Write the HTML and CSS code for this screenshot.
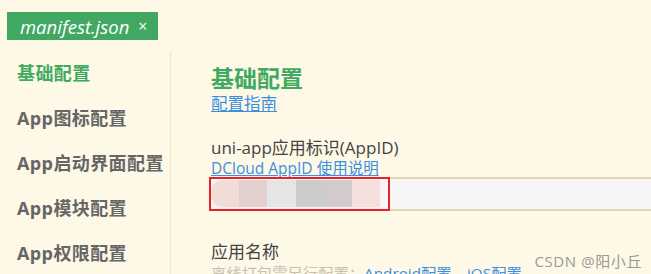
FILE: index.html
```html
<!DOCTYPE html>
<html lang="zh-CN">
<head>
    <meta charset="UTF-8">
    <title>manifest.json</title>
    <link rel="stylesheet" href="styles.css">
</head>
<body>
    <div class="tabs">
        <div class="tab">
            <span class="tab-name">manifest.json</span>
            <span class="tab-close">×</span>
        </div>
    </div>

    <div class="editor">
        <div class="sidebar">
            <a class="side-item active">基础配置</a>
            <a class="side-item">App图标配置</a>
            <a class="side-item">App启动界面配置</a>
            <a class="side-item">App模块配置</a>
            <a class="side-item">App权限配置</a>
        </div>
        <div class="main">
            <h1>基础配置</h1>
            <a class="link">配置指南</a>

            <div class="field">
                <div class="field-label">uni-app应用标识(AppID)</div>
                <a class="link small">DCloud AppID 使用说明</a>
                <div class="input-wrap">
                    <div class="input"></div>
                    <div class="mask">
                        <span class="m1"></span><span class="m2"></span><span class="m3"></span><span class="m4"></span><span class="m5"></span><span class="m6"></span>
                    </div>
                </div>
            </div>

            <div class="field">
                <div class="field-label">应用名称</div>
                <div class="hint">离线打包需另行配置：<a class="link">Android配置</a>、<a class="link">iOS配置</a></div>
            </div>
        </div>
    </div>

    <div class="watermark">CSDN @阳小丘</div>
</body>
</html>
```

FILE: styles.css
```css
* {
    margin: 0;
    padding: 0;
    box-sizing: border-box;
}
body {
    background-color: #fef8e7;
    font-family: "Open Sans", "Noto Sans CJK SC", sans-serif;
    width: 651px;
    height: 274px;
    overflow: hidden;
    position: relative;
}
.tabs {
    height: 51px;
    padding: 12px 0 0 7px;
}
.tab {
    display: inline-flex;
    align-items: center;
    height: 28px;
    width: 151px;
    background-color: #41a863;
    color: white;
    padding-left: 13px;
}
.tab-name {
    font-style: italic;
    font-size: 18.5px;
}
.tab-close {
    margin-left: 9px;
    font-size: 16px;
}
.editor {
    display: flex;
}
.sidebar {
    width: 171px;
    border-right: 1px solid #f1e6c8;
    padding-left: 17px;
    height: 240px;
}
.side-item {
    display: block;
    height: 45px;
    line-height: 45px;
    font-size: 18px;
    font-weight: bold;
    color: #666;
    white-space: nowrap;
    letter-spacing: 0.4px;
}
.side-item.active {
    color: #3eaa60;
}
.main {
    flex: 1;
    padding-left: 40px;
    padding-top: 12px;
}
h1 {
    font-size: 23px;
    line-height: 30px;
    color: #3eaa60;
}
.link {
    color: #3b8fe0;
    text-decoration: underline;
    font-size: 16.5px;
    line-height: 20px;
}
.field {
    margin-top: 22px;
}
.field-label {
    font-size: 17px;
    line-height: 22px;
    color: #444;
}
.link.small {
    display: block;
    font-size: 15.5px;
    line-height: 18px;
}
.input-wrap {
    position: relative;
    height: 34px;
    margin-left: -2px;
}
.input {
    height: 34px;
    background-color: #f5f5f5;
    border-top: 2px solid #e5d7b3;
    border-bottom: 2px solid #e5d7b3;
}
.mask {
    position: absolute;
    top: 0;
    left: 0;
    width: 181px;
    height: 34px;
    border: 2px solid #e8202a;
    display: flex;
    padding: 1px 8px 2px 0;
}
.mask span {
    flex: 1;
}
.m1 { background-color: #f2dcd8; border-radius: 12px 0 0 12px; }
.m2 { background-color: #e3cfcd; }
.m3 { background-color: #e5e5e5; }
.m4 { background-color: #cccccc; }
.m5 { background-color: #d2cacd; }
.m6 { background-color: #f5dfdd; }
.field + .field {
    margin-top: 30px;
}
.hint {
    font-size: 15.3px;
    line-height: 20px;
    color: #c9c0ad;
}
.hint .link {
    font-size: 15.3px;
    text-decoration: none;
}
.watermark {
    position: absolute;
    right: 9px;
    top: 250px;
    font-size: 15px;
    letter-spacing: 0.6px;
    color: #999;
}
```
